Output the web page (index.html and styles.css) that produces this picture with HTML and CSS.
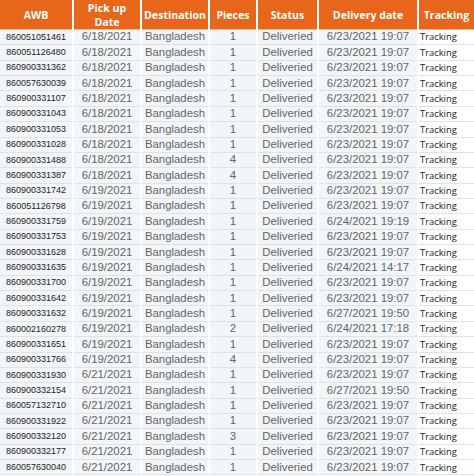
FILE: index.html
```html
<!DOCTYPE html>
<html>
<head>
<meta charset="utf-8">
<link rel="stylesheet" href="styles.css">
</head>
<body>
<div class="sheet" id="sheet">
  <div class="hd">AWB</div>
  <div class="hd">Pick up<br>Date</div>
  <div class="hd">Destination</div>
  <div class="hd">Pieces</div>
  <div class="hd">Status</div>
  <div class="hd">Delivery date</div>
  <div class="hd">Tracking</div>
</div>
<script src="app.js"></script>
</body>
</html>
```
FILE: app.js
```js
const rows = [
["860051051461","6/18/2021","1","6/23/2021 19:07"],
["860051126480","6/18/2021","1","6/23/2021 19:07"],
["860900331362","6/18/2021","1","6/23/2021 19:07"],
["860057630039","6/18/2021","1","6/23/2021 19:07"],
["860900331107","6/18/2021","1","6/23/2021 19:07"],
["860900331043","6/18/2021","1","6/23/2021 19:07"],
["860900331053","6/18/2021","1","6/23/2021 19:07"],
["860900331028","6/18/2021","1","6/23/2021 19:07"],
["860900331488","6/18/2021","4","6/23/2021 19:07"],
["860900331387","6/18/2021","4","6/23/2021 19:07"],
["860900331742","6/19/2021","1","6/23/2021 19:07"],
["860051126798","6/19/2021","1","6/23/2021 19:07"],
["860900331759","6/19/2021","1","6/24/2021 19:19"],
["860900331753","6/19/2021","1","6/23/2021 19:07"],
["860900331628","6/19/2021","1","6/23/2021 19:07"],
["860900331635","6/19/2021","1","6/24/2021 14:17"],
["860900331700","6/19/2021","1","6/23/2021 19:07"],
["860900331642","6/19/2021","1","6/23/2021 19:07"],
["860900331632","6/19/2021","1","6/27/2021 19:50"],
["860002160278","6/19/2021","2","6/24/2021 17:18"],
["860900331651","6/19/2021","1","6/23/2021 19:07"],
["860900331766","6/19/2021","4","6/23/2021 19:07"],
["860900331930","6/21/2021","1","6/23/2021 19:07"],
["860900332154","6/21/2021","1","6/27/2021 19:50"],
["860057132710","6/21/2021","1","6/23/2021 19:07"],
["860900331922","6/21/2021","1","6/23/2021 19:07"],
["860900332120","6/21/2021","3","6/23/2021 19:07"],
["860900332177","6/21/2021","1","6/23/2021 19:07"],
["860057630040","6/21/2021","1","6/23/2021 19:07"]
];
const sheet = document.getElementById("sheet");
const html = [];
for (const r of rows) {
  html.push('<div class="c awb">' + r[0] + '</div>');
  html.push('<div class="c">' + r[1] + '</div>');
  html.push('<div class="c">Bangladesh</div>');
  html.push('<div class="c">' + r[2] + '</div>');
  html.push('<div class="c">Deliveried</div>');
  html.push('<div class="c">' + r[3] + '</div>');
  html.push('<div class="c trk">Tracking</div>');
}
sheet.insertAdjacentHTML("beforeend", html.join(""));
```
FILE: styles.css
```css
html, body {
  margin: 0;
  padding: 0;
  background: #ffffff;
}
.sheet {
  width: 474px;
  display: grid;
  grid-template-columns: 72px 66px 66px 46px 59px 98px 55px;
  grid-template-rows: 30px;
  grid-auto-rows: 15.36px;
  column-gap: 2px;
  overflow: hidden;
}
.hd {
  background: #e8651c;
  color: #ffffff;
  font-family: "Open Sans", sans-serif;
  font-weight: 700;
  font-size: 10.6px;
  line-height: 14px;
  display: flex;
  align-items: center;
  justify-content: center;
  text-align: center;
  border-bottom: 1px solid #f3b48c;
  box-sizing: border-box;
}
.c {
  background: #f3f6f8;
  border-bottom: 1px solid #dde3e7;
  box-sizing: border-box;
  font-family: "Liberation Sans", Arial, sans-serif;
  font-size: 11.4px;
  color: #646464;
  display: flex;
  align-items: center;
  justify-content: center;
  white-space: nowrap;
  line-height: 1;
}
.awb {
  font-size: 9px;
  color: #222222;
}
.trk {
  background: #ffffff;
  justify-content: flex-start;
  padding-left: 1px;
  font-family: "Open Sans", sans-serif;
  font-size: 9.4px;
  color: #222222;
}
```
